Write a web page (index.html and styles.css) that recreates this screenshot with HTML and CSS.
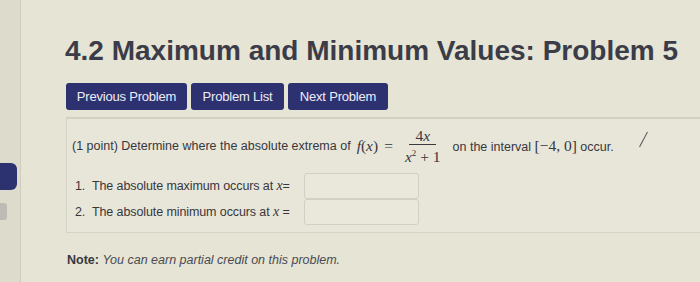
FILE: index.html
```html
<!DOCTYPE html>
<html>
<head>
<meta charset="utf-8">
<link rel="stylesheet" href="styles.css">
</head>
<body>
<div class="page">
  <aside class="sidebar">
    <div class="blob-navy"></div>
    <div class="blob-gray"></div>
  </aside>
  <main class="main">
    <h1 class="title">4.2 Maximum and Minimum Values: Problem 5</h1>
    <nav class="buttons">
      <span class="btn btn-prev">Previous Problem</span>
      <span class="btn btn-list">Problem List</span>
      <span class="btn btn-next">Next Problem</span>
    </nav>
    <section class="problem">
      <div class="statement">
        <span>(1 point) Determine where the absolute extrema of</span>
        <span class="math fx"><i>f</i>(<i>x</i>)<span class="eq">=</span></span>
        <span class="frac"><span class="num"><span class="m">4</span><i class="m">x</i></span><span class="den"><i class="m">x</i><sup>2</sup><span class="m"> + 1</span></span></span>
        <span class="after">on the interval <span class="math">[−4, 0]</span> occur.</span>
        <span class="mark"></span>
      </div>
      <ol class="answers">
        <li class="row"><span class="label">1.&nbsp;&nbsp;The absolute maximum occurs at <i class="mx">x</i>=</span><span class="field"></span></li>
        <li class="row"><span class="label">2.&nbsp;&nbsp;The absolute minimum occurs at <i class="mx">x</i> =</span><span class="field"></span></li>
      </ol>
    </section>
    <p class="note"><b>Note:</b> <i>You can earn partial credit on this problem.</i></p>
  </main>
</div>
</body>
</html>
```

FILE: styles.css
```css
html, body {
  margin: 0;
  padding: 0;
  background: #e5e4d5;
  font-family: "Liberation Sans", Arial, sans-serif;
  color: #37373e;
}

.page {
  display: flex;
  width: 700px;
  height: 282px;
  overflow: hidden;
}

.sidebar {
  width: 21px;
  flex: none;
  background: #dddbcc;
  border-right: 1px solid #cfcdbf;
  padding-top: 163px;
  box-sizing: border-box;
}

.blob-navy {
  width: 17px;
  height: 27px;
  background: #2c3270;
  border-radius: 0 6px 6px 0;
}

.blob-gray {
  width: 7px;
  height: 17px;
  margin-top: 13px;
  background: #bdbbb3;
  border-radius: 0 3px 3px 0;
}

.main {
  flex: 1;
  padding-left: 44px;
}

.title {
  margin: 35px 0 0;
  font-size: 28px;
  font-weight: bold;
  color: #3b3c48;
  line-height: 31px;
  white-space: nowrap;
}

.buttons {
  display: flex;
  gap: 4px;
  margin-top: 17px;
  margin-left: 1px;
}

.btn {
  display: inline-flex;
  align-items: center;
  justify-content: center;
  height: 27px;
  background: #2d3170;
  color: #eeeef4;
  font-size: 13px;
  border-radius: 3px;
  letter-spacing: -0.2px;
}

.btn-prev { width: 121px; }
.btn-list { width: 93px; }
.btn-next { width: 100px; }

.problem {
  margin-top: 7px;
  margin-left: 1px;
  border: 1px solid #d6d4c6;
  border-top: 2px solid #d3d1c3;
  border-right: none;
  background: #e7e6d8;
  padding: 9px 0 8px 5px;
  height: 116px;
  box-sizing: border-box;
}

.statement {
  display: flex;
  align-items: center;
  gap: 5px;
  font-size: 12.5px;
  color: #37373e;
  white-space: nowrap;
}

.math {
  font-family: "Liberation Serif", "Times New Roman", serif;
  font-size: 15.5px;
}

.fx { margin-left: 1px; }

.eq {
  margin: 0 6px;
}

.frac {
  display: inline-flex;
  flex-direction: column;
  align-items: center;
  font-family: "Liberation Serif", "Times New Roman", serif;
  font-size: 15.5px;
  margin: 0 1px;
}

.num {
  padding: 0 6px 1px;
  border-bottom: 1px solid #3a3a40;
  line-height: 15px;
}

.den {
  padding-top: 1px;
  line-height: 15px;
}

.den sup {
  font-size: 9px;
  vertical-align: 6px;
}

.after {
  margin-left: 6px;
}

.mark {
  width: 1px;
  height: 17px;
  background: #55555a;
  transform: rotate(28deg);
  margin-left: 24px;
  margin-top: -14px;
}

.answers {
  list-style: none;
  margin: 9px 0 0;
  padding: 0 0 0 3px;
}

.row {
  display: flex;
  align-items: center;
  height: 26px;
  font-size: 12.5px;
}

.label {
  width: 229px;
  white-space: nowrap;
  letter-spacing: -0.1px;
}

.mx {
  font-family: "Liberation Serif", "Times New Roman", serif;
  font-size: 14px;
}

.field {
  width: 115px;
  height: 26px;
  border: 1px solid #d2d0c3;
  border-radius: 3px;
  background: #e9e8db;
  box-sizing: border-box;
}

.note {
  margin: 20px 0 0 2px;
  font-size: 12.5px;
  color: #37373e;
}

.note i {
  color: #4a4a52;
}
```
